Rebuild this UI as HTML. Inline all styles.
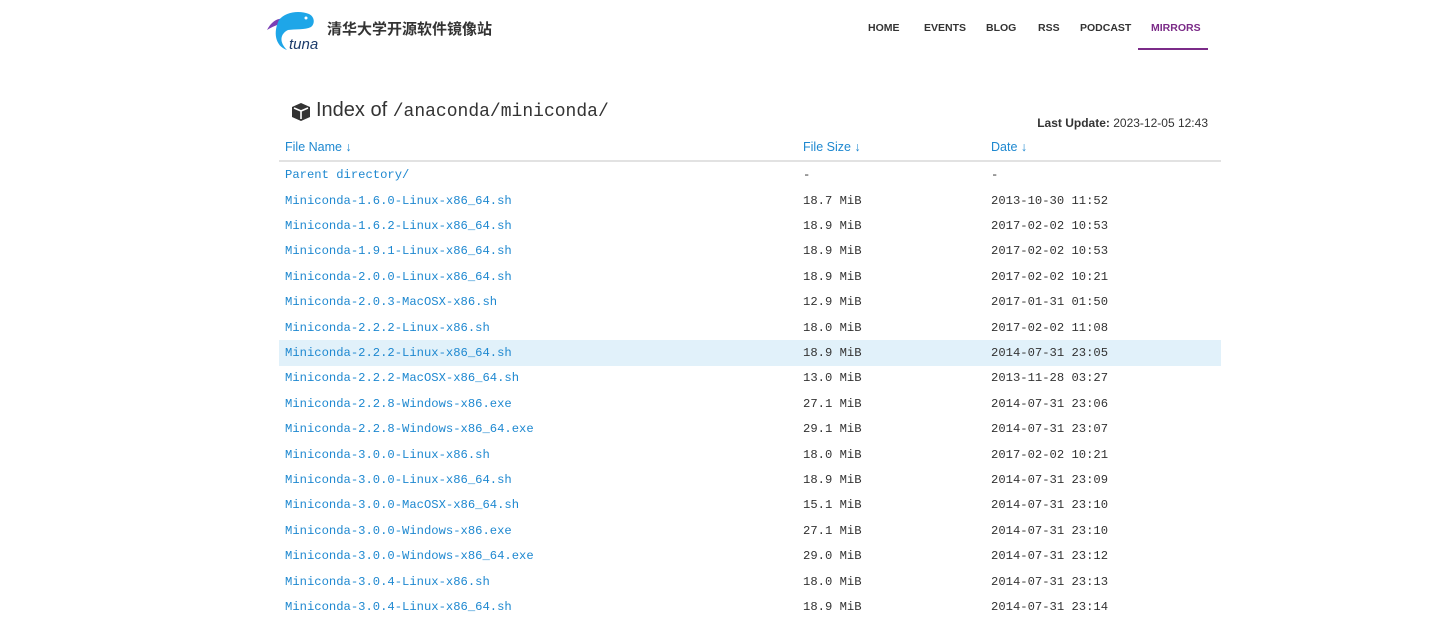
<!DOCTYPE html>
<html><head><meta charset="utf-8"><style>
body{margin:0;background:#fff;font-family:"Liberation Sans","Noto Sans CJK SC",sans-serif;width:1440px;height:611px;overflow:hidden;position:relative}
.a{position:absolute}
.nav{font-size:10.5px;color:#333;top:22px;font-weight:bold}
table{position:absolute;left:279px;top:134px;width:942px;border-collapse:collapse}
th{text-align:left;font-weight:normal;color:#1e88d0;font-size:12.5px;height:26px;padding:0 0 0 6px;border-bottom:2px solid #e2e2e2}
td{font-family:"Liberation Mono",monospace;font-size:12.2px;height:25.4px;padding:0 0 0 6px;color:#333}
td a{color:#1e88d0;text-decoration:none}
tr.h td{background:#e1f1fa}
</style></head><body>
<svg class="a" style="left:265px;top:8px" width="58" height="44" viewBox="0 0 58 44">
<path d="M2 22 C8 10 18 8 24 14 C18 15 10 17 2 22Z" fill="#7a3fb5"/>
<path d="M14 12 C20 4 34 2 44 6 C50 9 50 16 46 19 C40 22 30 21 23 22 C15 26 14 34 22 42 C10 38 8 24 14 12Z" fill="#1ea6e8"/>
<circle cx="41" cy="10" r="1.5" fill="#fff"/>
<text x="24" y="41" font-family="Liberation Sans" font-size="15" fill="#1a3a6a" font-style="italic">tuna</text>
</svg>
<div class="a" style="left:327px;top:18px;font-size:15px;font-weight:bold;color:#333">清华大学开源软件镜像站</div>
<div class="a nav" style="left:868px">HOME</div>
<div class="a nav" style="left:924px">EVENTS</div>
<div class="a nav" style="left:986px">BLOG</div>
<div class="a nav" style="left:1038px">RSS</div>
<div class="a nav" style="left:1080px">PODCAST</div>
<div class="a nav" style="left:1151px;color:#7b2b88">MIRRORS</div>
<div class="a" style="left:1138px;top:48px;width:70px;height:2px;background:#7b2b88"></div>
<svg class="a" style="left:291px;top:102px" width="20" height="20" viewBox="0 0 20 20"><path d="M10 1 L19 5 V15 L10 19 L1 15 V5Z" fill="#333"/><path d="M3 6 L10 9 L17 6 M10 9 V17" stroke="#fff" stroke-width="1.6" fill="none"/></svg>
<div class="a" style="left:316px;top:99px;font-size:20px;color:#333">Index of <span style="font-family:'Liberation Mono',monospace;font-size:18px">/anaconda/miniconda/</span></div>
<div class="a" style="right:232px;top:116px;font-size:12px;color:#333"><b>Last Update:</b> 2023-12-05 12:43</div>
<table>
<tr><th style="width:512px">File Name ↓</th><th style="width:182px">File Size ↓</th><th>Date ↓</th></tr>
<tr><td style="height:26px"><a>Parent directory/</a></td><td>-</td><td>-</td></tr>
<tr><td><a>Miniconda-1.6.0-Linux-x86_64.sh</a></td><td>18.7 MiB</td><td>2013-10-30 11:52</td></tr>
<tr><td><a>Miniconda-1.6.2-Linux-x86_64.sh</a></td><td>18.9 MiB</td><td>2017-02-02 10:53</td></tr>
<tr><td><a>Miniconda-1.9.1-Linux-x86_64.sh</a></td><td>18.9 MiB</td><td>2017-02-02 10:53</td></tr>
<tr><td><a>Miniconda-2.0.0-Linux-x86_64.sh</a></td><td>18.9 MiB</td><td>2017-02-02 10:21</td></tr>
<tr><td><a>Miniconda-2.0.3-MacOSX-x86.sh</a></td><td>12.9 MiB</td><td>2017-01-31 01:50</td></tr>
<tr><td><a>Miniconda-2.2.2-Linux-x86.sh</a></td><td>18.0 MiB</td><td>2017-02-02 11:08</td></tr>
<tr class="h"><td><a>Miniconda-2.2.2-Linux-x86_64.sh</a></td><td>18.9 MiB</td><td>2014-07-31 23:05</td></tr>
<tr><td><a>Miniconda-2.2.2-MacOSX-x86_64.sh</a></td><td>13.0 MiB</td><td>2013-11-28 03:27</td></tr>
<tr><td><a>Miniconda-2.2.8-Windows-x86.exe</a></td><td>27.1 MiB</td><td>2014-07-31 23:06</td></tr>
<tr><td><a>Miniconda-2.2.8-Windows-x86_64.exe</a></td><td>29.1 MiB</td><td>2014-07-31 23:07</td></tr>
<tr><td><a>Miniconda-3.0.0-Linux-x86.sh</a></td><td>18.0 MiB</td><td>2017-02-02 10:21</td></tr>
<tr><td><a>Miniconda-3.0.0-Linux-x86_64.sh</a></td><td>18.9 MiB</td><td>2014-07-31 23:09</td></tr>
<tr><td><a>Miniconda-3.0.0-MacOSX-x86_64.sh</a></td><td>15.1 MiB</td><td>2014-07-31 23:10</td></tr>
<tr><td><a>Miniconda-3.0.0-Windows-x86.exe</a></td><td>27.1 MiB</td><td>2014-07-31 23:10</td></tr>
<tr><td><a>Miniconda-3.0.0-Windows-x86_64.exe</a></td><td>29.0 MiB</td><td>2014-07-31 23:12</td></tr>
<tr><td><a>Miniconda-3.0.4-Linux-x86.sh</a></td><td>18.0 MiB</td><td>2014-07-31 23:13</td></tr>
<tr><td><a>Miniconda-3.0.4-Linux-x86_64.sh</a></td><td>18.9 MiB</td><td>2014-07-31 23:14</td></tr>
</table>
</body></html>
